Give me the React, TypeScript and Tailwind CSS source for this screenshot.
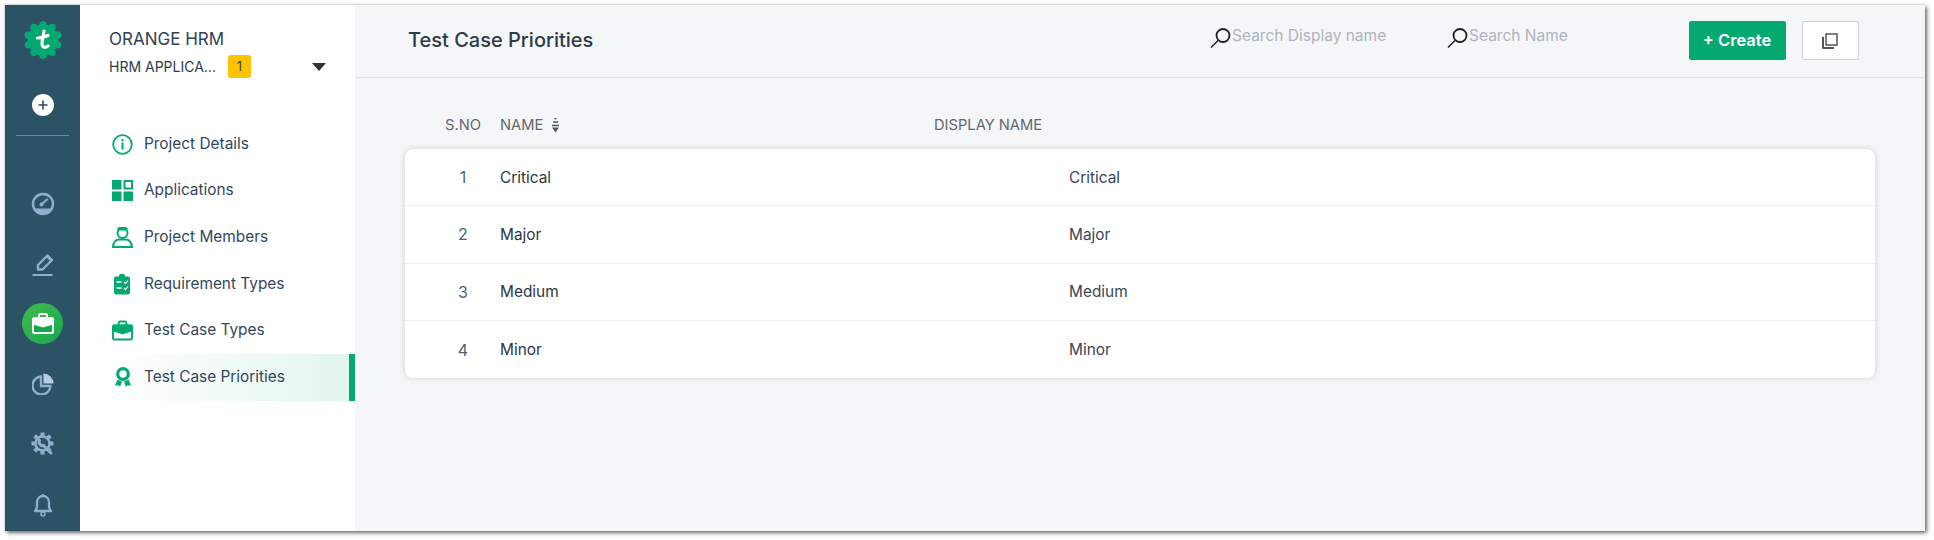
const FONT = "font-['Inter',sans-serif]";

const GREEN = "#04a972";
const RAIL = "#8fb0cc";

function LogoMark() {
  const bumps = Array.from({ length: 10 }, (_, i) => {
    const a = (i / 10) * Math.PI * 2 - Math.PI / 2;
    return { x: 20 + Math.cos(a) * 15.5, y: 20 + Math.sin(a) * 15.5 };
  });
  return (
    <svg width="40" height="40" viewBox="0 0 40 40">
      <circle cx="20" cy="20" r="15.5" fill={GREEN} />
      {bumps.map((b) => (
        <circle key={`${b.x}-${b.y}`} cx={b.x} cy={b.y} r="3.6" fill={GREEN} />
      ))}
      <path
        d="M21 11c-.5 4-2 9-2 12.500 0 3.500 2.500 5 6 2.500M14.500 18c4 0 7.500-1 10.500-2.500"
        fill="none"
        stroke="#fff"
        strokeWidth="3.200"
        strokeLinecap="round"
      />
    </svg>
  );
}

function PlusCircle() {
  return (
    <svg width="22" height="22" viewBox="0 0 22 22">
      <circle cx="11" cy="11" r="11" fill="#fff" />
      <path d="M11 6.500v9M6.500 11h9" stroke="#3a4a58" strokeWidth="1.600" />
    </svg>
  );
}

function GaugeIcon() {
  return (
    <svg width="24" height="24" viewBox="0 0 24 24">
      <circle cx="12" cy="12" r="10" fill="none" stroke={RAIL} strokeWidth="2.400" />
      <path d="M3.500 16.500h17A10 10 0 0 1 12 22a10 10 0 0 1-8.500-5.500z" fill={RAIL} />
      <path d="M10.500 12.500 16 7.500" stroke={RAIL} strokeWidth="2" strokeLinecap="round" />
      <circle cx="10.500" cy="12.500" r="2" fill={RAIL} />
    </svg>
  );
}

function PenIcon() {
  return (
    <svg width="24" height="26" viewBox="0 0 24 26">
      <path
        d="M7 18.500v-4.500L16.500 4.500l4.500 4.500-9.500 9.500z"
        fill="none"
        stroke={RAIL}
        strokeWidth="2.400"
        strokeLinejoin="round"
      />
      <path d="M15 6l4.500 4.500 2-2-4.500-4.500z" fill={RAIL} />
      <path d="M1.500 24h20" stroke={RAIL} strokeWidth="2" />
    </svg>
  );
}

function BriefcaseIcon({ color, flap }: { color: string; flap: string }) {
  return (
    <svg width="22" height="21" viewBox="0 0 22 21">
      <path d="M7 5V2.500A1.500 1.500 0 0 1 8.500 1h5A1.500 1.500 0 0 1 15 2.500V5" fill="none" stroke={color} strokeWidth="2" />
      <rect x="1" y="5" width="20" height="15" rx="1.500" fill={flap} stroke={color} strokeWidth="2" />
      <path d="M1 5h20v6.500l-10 3-10-3z" fill={color} />
    </svg>
  );
}

function PieIcon() {
  return (
    <svg width="22" height="22" viewBox="0 0 22 22">
      <path d="M9 3.500a9 9 0 1 0 9.500 9.500H9z" fill="none" stroke={RAIL} strokeWidth="2.400" />
      <path d="M11.500 0.500a10 10 0 0 1 10 10h-10z" fill="#b3cde0" />
    </svg>
  );
}

function GearToolIcon() {
  const teeth = Array.from({ length: 8 }, (_, i) => i * 45);
  return (
    <svg width="24" height="24" viewBox="0 0 24 24">
      {teeth.map((deg) => (
        <rect key={deg} x="9.500" y="0.500" width="4" height="4.500" fill={RAIL} transform={`rotate(${deg} 11.500 11.500)`} />
      ))}
      <circle cx="11.500" cy="11.500" r="7" fill="#2c5266" stroke={RAIL} strokeWidth="2.400" />
      <path d="M8.500 8.500a3.500 3.500 0 0 0 4 5l7.500 7.500" fill="none" stroke={RAIL} strokeWidth="3" strokeLinecap="round" />
    </svg>
  );
}

function BellIcon() {
  return (
    <svg width="20" height="24" viewBox="0 0 20 24">
      <path
        d="M2 18c1.500-1.500 2-3 2-5.500V9a6 6 0 0 1 12 0v3.500c0 2.500.500 4 2 5.500z"
        fill="none"
        stroke={RAIL}
        strokeWidth="2.300"
        strokeLinejoin="round"
      />
      <path d="M10 1v2" stroke={RAIL} strokeWidth="2" />
      <circle cx="10" cy="21" r="2" fill="none" stroke={RAIL} strokeWidth="1.600" />
    </svg>
  );
}

function InfoIcon() {
  return (
    <svg width="21" height="21" viewBox="0 0 21 21">
      <circle cx="10.500" cy="10.500" r="9.300" fill="none" stroke={GREEN} strokeWidth="1.800" />
      <rect x="9.500" y="5" width="2" height="2.200" fill={GREEN} />
      <rect x="9.500" y="8.500" width="2" height="7" fill={GREEN} />
    </svg>
  );
}

function AppsIcon() {
  return (
    <svg width="21" height="21" viewBox="0 0 21 21">
      <rect x="0" y="0" width="9.500" height="9.500" fill={GREEN} />
      <rect x="12.500" y="1" width="7.500" height="7.500" fill="none" stroke={GREEN} strokeWidth="2" />
      <rect x="0" y="11.500" width="9.500" height="9.500" fill={GREEN} />
      <rect x="11.500" y="11.500" width="9.500" height="9.500" fill={GREEN} />
    </svg>
  );
}

function MemberIcon() {
  return (
    <svg width="21" height="21" viewBox="0 0 21 21">
      <circle cx="10.500" cy="6" r="5" fill="none" stroke={GREEN} strokeWidth="2" />
      <path d="M5.500 3.500h10V1.500a6 6 0 0 0-10 0z" fill={GREEN} />
      <path d="M1 20c0-4.500 3-7.500 6-7.500h7c3 0 6 3 6 7.500z" fill="none" stroke={GREEN} strokeWidth="2" />
    </svg>
  );
}

function ChecklistIcon() {
  return (
    <svg width="17" height="21" viewBox="0 0 17 21">
      <rect x="0" y="2.500" width="16" height="18" rx="2" fill={GREEN} />
      <rect x="5" y="0" width="6" height="4.500" rx="1.500" fill={GREEN} />
      <path d="M2.500 8h5M2.500 14h5" stroke="#fff" strokeWidth="1.300" />
      <path d="M10 8l1.500 1.500L14 6.500M10 14l1.500 1.500 2.500-3" fill="none" stroke="#fff" strokeWidth="1.100" />
    </svg>
  );
}

function RibbonIcon() {
  return (
    <svg width="16" height="20" viewBox="0 0 16 20">
      <circle cx="8" cy="7" r="5.300" fill="none" stroke={GREEN} strokeWidth="3.200" />
      <path d="M2.500 12.500 0 18.500l3.500-.3 1.500 1.500 2-5zM13.500 12.500l2.500 6-3.500-.3-1.500 1.500-2-5z" fill={GREEN} />
    </svg>
  );
}

function SearchGlyph() {
  return (
    <svg width="21" height="20" viewBox="0 0 21 20">
      <circle cx="13" cy="7.500" r="6.500" fill="none" stroke="#222" strokeWidth="1.800" />
      <path d="M8 12.500 1 19.500" stroke="#222" strokeWidth="1.500" />
    </svg>
  );
}

function CopyGlyph() {
  return (
    <svg width="16" height="16" viewBox="0 0 16 16">
      <path d="M1 4v10.500a.5.500 0 0 0 .5.500H12" fill="none" stroke="#555" strokeWidth="2" />
      <rect x="4" y="1" width="11" height="11" fill="none" stroke="#555" strokeWidth="1.500" />
    </svg>
  );
}

function SortGlyph() {
  return (
    <svg width="9" height="15" viewBox="0 0 9 15">
      <path d="M3.500 0.500h2M2 4h5M1 7.500h7" stroke="#555" strokeWidth="1.300" />
      <path d="M1 9.500h7L4.500 14.500z" fill="#555" />
    </svg>
  );
}

const NAV = [
  { label: "Project Details", icon: <InfoIcon /> },
  { label: "Applications", icon: <AppsIcon /> },
  { label: "Project Members", icon: <MemberIcon /> },
  { label: "Requirement Types", icon: <ChecklistIcon /> },
  { label: "Test Case Types", icon: <BriefcaseIcon color={GREEN} flap="#fff" /> },
  { label: "Test Case Priorities", icon: <RibbonIcon />, active: true },
];

const ROWS = [
  { no: 1, name: "Critical" },
  { no: 2, name: "Major" },
  { no: 3, name: "Medium" },
  { no: 4, name: "Minor" },
];

export default function App() {
  return (
    <div className={`h-[540px] w-[1934px] overflow-hidden bg-white pl-[5px] pt-[5px] ${FONT}`}>
      <div className="flex h-[526px] w-[1920px] shadow-[2px_2px_4px_rgba(0,0,0,0.55),0_0_3px_rgba(0,0,0,0.2)]">
        {/* Icon rail */}
        <aside className="flex w-[75px] shrink-0 flex-col items-center bg-[#2c5266]">
          <div className="mt-[15px] flex h-[40px] items-center justify-center">
            <LogoMark />
          </div>
          <div className="mt-[34px]">
            <PlusCircle />
          </div>
          <div className="mt-[19px] h-px w-[53px] bg-[#6f8a9a]" />
          <div className="mt-[56px] flex h-[24px] items-center">
            <GaugeIcon />
          </div>
          <div className="mt-[35px] flex h-[26px] items-center">
            <PenIcon />
          </div>
          <div className="mt-[26px] flex size-[41px] items-center justify-center rounded-full bg-gradient-to-br from-[#3fbb4c] to-[#0fa84f]">
            <BriefcaseIcon color="#fff" flap="#0fa84f" />
          </div>
          <div className="mt-[29px] flex h-[22px] items-center">
            <PieIcon />
          </div>
          <div className="mt-[37px] flex h-[24px] items-center">
            <GearToolIcon />
          </div>
          <div className="mt-[37px] flex h-[24px] items-center">
            <BellIcon />
          </div>
        </aside>

        {/* Project panel */}
        <nav className="w-[275px] shrink-0 bg-white">
          <div className="pl-[29px] pt-[24px]">
            <div className="text-[17px] leading-[20px] text-[#2f4354]">ORANGE HRM</div>
            <div className="mt-[6px] flex items-center">
              <span className="w-[119px] text-[14px] leading-[23px] text-[#2f3b47]">HRM APPLICA...</span>
              <span className="flex h-[23px] w-[23px] items-center justify-center rounded-[3px] bg-[#ffc400] text-[13px] text-[#3a3a3a]">
                1
              </span>
              <span className="ml-[61px] h-0 w-0 border-x-[7.5px] border-t-[8px] border-x-transparent border-t-[#333]" />
            </div>
          </div>
          <ul className="mt-[43px]">
            {NAV.map((item) => (
              <li
                key={item.label}
                className={`relative flex h-[46.6px] items-center pl-[32px] text-[15.4px] text-[#33475b] ${
                  item.active
                    ? "bg-gradient-to-r from-white from-[12%] to-[#e2f5ee] border-r-[6px] border-[#04a972]"
                    : ""
                }`}
              >
                <span className="flex w-[21px] justify-center">{item.icon}</span>
                <span className="relative -top-[1px] ml-[11px]">{item.label}</span>
              </li>
            ))}
          </ul>
        </nav>

        {/* Main */}
        <main className="min-w-0 flex-1 bg-[#f5f6f8]">
          <header className="flex h-[73px] items-start border-b border-[#e1e4e8] pl-[53px]">
            <h1 className="mt-[23px] w-[802px] text-[20px] font-medium leading-[24px] text-[#2f3b47]">
              Test Case Priorities
            </h1>
            <div className="mt-[23px] flex w-[237px] items-start">
              <SearchGlyph />
              <span className="ml-px pt-[1px] text-[15.5px] leading-[14px] text-[#aeb4bd]">Search Display name</span>
            </div>
            <div className="mt-[23px] flex w-[241.5px] items-start">
              <SearchGlyph />
              <span className="ml-px pt-[1px] text-[15.5px] leading-[14px] text-[#aeb4bd]">Search Name</span>
            </div>
            <button className="mt-[16px] h-[39px] w-[97px] rounded-[2px] bg-[#04a972] text-[16.5px] font-semibold text-white">
              + Create
            </button>
            <button className="ml-[16px] mt-[16px] flex h-[39px] w-[57px] items-center justify-center rounded-[2px] border border-[#cdd5de] bg-white">
              <CopyGlyph />
            </button>
          </header>

          <section className="pl-[50px] pr-[50px]">
            <div className="grid h-[71px] grid-cols-[95px_434px_1fr] items-center pt-[24px] text-[14.7px] uppercase text-[#62676c]">
              <div className="pl-[40px]">S.No</div>
              <div className="flex items-center gap-[8px]">
                Name
                <SortGlyph />
              </div>
              <div>Display Name</div>
            </div>
            <div className="rounded-[8px] bg-white shadow-[0_0_6px_rgba(0,0,0,0.16)]">
              {ROWS.map((row) => (
                <div
                  key={row.no}
                  className="grid h-[57.3px] grid-cols-[95px_569px_1fr] items-center border-b border-[#eceef0] text-[15.4px] text-[#3a4652] last:border-b-0"
                >
                  <div className="w-[116px] text-center text-[16px] text-[#45627a]">{row.no}</div>
                  <div className="text-[#2b3743]">{row.name}</div>
                  <div>{row.name}</div>
                </div>
              ))}
            </div>
          </section>
        </main>
      </div>
    </div>
  );
}
